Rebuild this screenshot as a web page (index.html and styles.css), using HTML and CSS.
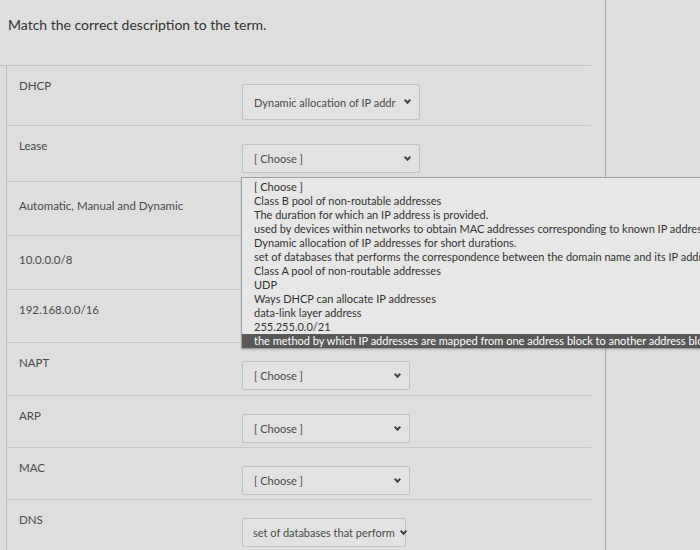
FILE: index.html
```html
<!DOCTYPE html>
<html>
<head>
<meta charset="utf-8">
<link rel="stylesheet" href="styles.css">
</head>
<body>
<div class="page">
  <div class="panel">
    <h1 class="title">Match the correct description to the term.</h1>
    <div class="rows">
      <div class="row r1">
        <div class="term">DHCP</div>
        <div class="select tall"><span class="val">Dynamic allocation of IP addr</span><span class="chev"></span></div>
      </div>
      <div class="row r2">
        <div class="term">Lease</div>
        <div class="select"><span class="val">[ Choose ]</span><span class="chev"></span></div>
      </div>
      <div class="row r3">
        <div class="term">Automatic, Manual and Dynamic</div>
      </div>
      <div class="row r3">
        <div class="term">10.0.0.0/8</div>
      </div>
      <div class="row r4">
        <div class="term">192.168.0.0/16</div>
      </div>
      <div class="row r4">
        <div class="term">NAPT</div>
        <div class="select narrow"><span class="val">[ Choose ]</span><span class="chev"></span></div>
      </div>
      <div class="row">
        <div class="term">ARP</div>
        <div class="select narrow"><span class="val">[ Choose ]</span><span class="chev"></span></div>
      </div>
      <div class="row">
        <div class="term">MAC</div>
        <div class="select narrow"><span class="val">[ Choose ]</span><span class="chev"></span></div>
      </div>
      <div class="row last">
        <div class="term">DNS</div>
        <div class="select narrower"><span class="val">set of databases that perform</span><span class="chev"></span></div>
      </div>
    </div>
  </div>
  <ul class="dropdown">
    <li>[ Choose ]</li>
    <li>Class B pool of non-routable addresses</li>
    <li>The duration for which an IP address is provided.</li>
    <li>used by devices within networks to obtain MAC addresses corresponding to known IP addresses</li>
    <li>Dynamic allocation of IP addresses for short durations.</li>
    <li>set of databases that performs the correspondence between the domain name and its IP address</li>
    <li>Class A pool of non-routable addresses</li>
    <li>UDP</li>
    <li>Ways DHCP can allocate IP addresses</li>
    <li>data-link layer address</li>
    <li>255.255.0.0/21</li>
    <li class="active">the method by which IP addresses are mapped from one address block to another address block</li>
  </ul>
</div>
</body>
</html>
```

FILE: styles.css
```css
html, body {
  margin: 0;
  padding: 0;
  background: #dedede;
  overflow: hidden;
}
body {
  width: 700px;
  height: 550px;
  font-family: Lato, "Open Sans", sans-serif;
}
.page {
  position: relative;
  width: 700px;
  height: 550px;
  overflow: hidden;
}
.panel {
  width: 606px;
  height: 550px;
  border-right: 1px solid #a8a8a8;
  box-sizing: border-box;
}
.title {
  margin: 0 14px 0 0;
  padding: 16px 0 0 8px;
  height: 66px;
  box-sizing: border-box;
  font-size: 14px;
  font-weight: 400;
  color: #333;
  border-bottom: 1px solid #c4c4c4;
}
.rows {
  margin-left: 6px;
  margin-right: 14px;
  border-left: 1px solid #c0c0c0;
}
.row {
  display: flex;
  align-items: flex-start;
  height: 52px;
  box-sizing: border-box;
  border-bottom: 1px solid #c8c8c8;
  padding-left: 12px;
}
.row.r1 { height: 60px; }
.row.r2 { height: 56px; }
.row.r3 { height: 54px; }
.row.r4 { height: 53px; }
.row.last { border-bottom: none; }
.term {
  width: 223px;
  flex: none;
  font-size: 11.5px;
  line-height: 14px;
  color: #4a4a4a;
  padding-top: 13px;
}
.r3 .term { padding-top: 17px; }
.select {
  display: flex;
  align-items: center;
  justify-content: space-between;
  margin-top: 18px;
  width: 178px;
  height: 29px;
  box-sizing: border-box;
  border: 1px solid #c2c2c2;
  border-radius: 2px;
  background: #e2e2e2;
  padding: 0 9px 0 11px;
  font-size: 11px;
  color: #4a4a4a;
}
.select.tall { height: 36px; margin-top: 18px; }
.select.narrow { width: 168px; }
.select.narrower { width: 164px; padding-right: 7px; padding-left: 10px; }
.val { white-space: nowrap; }
.chev {
  width: 3px;
  height: 3px;
  border-right: 2px solid #444;
  border-bottom: 2px solid #444;
  transform: rotate(45deg);
  margin-top: -3px;
  margin-left: 6px;
  flex: none;
}
.dropdown {
  position: absolute;
  left: 241px;
  top: 177px;
  width: 520px;
  margin: 0;
  padding: 2px 0 0 0;
  list-style: none;
  background: #e7e7e7;
  border: 1px solid #a0a0a0;
  box-shadow: 0 1px 2px rgba(0,0,0,0.15);
}
.dropdown li {
  font-size: 11px;
  line-height: 14px;
  color: #333;
  padding-left: 12px;
  white-space: nowrap;
}
.dropdown li.active {
  background: #585858;
  color: #fff;
}
```
